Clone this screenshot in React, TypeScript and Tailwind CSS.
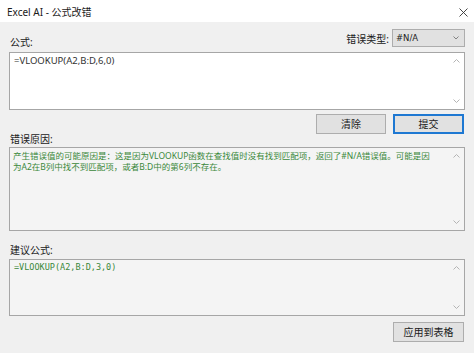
const Chevron = ({ up }: { up?: boolean }) => (
  <svg width="7" height="4" viewBox="0 0 7 4" className="block">
    <path
      d={up ? "M0.5 3.5 L3.5 0.5 L6.5 3.5" : "M0.5 0.5 L3.5 3.5 L6.5 0.5"}
      fill="none"
      stroke="#b4b4b4"
      strokeWidth="1"
    />
  </svg>
);

const ScrollArrows = () => (
  <div className="absolute right-[4px] top-[6px] bottom-[6px] flex flex-col justify-between">
    <Chevron up />
    <Chevron />
  </div>
);

const cjk = "font-['Noto_Sans','Noto_Sans_CJK_SC',sans-serif]";

export default function App() {
  return (
    <div className={`w-[474px] h-[353px] flex flex-col bg-white text-[#1a1a1a] ${cjk}`}>
      {/* title bar */}
      <div className="h-[22px] flex items-center justify-between pl-[7px] pr-[6px] bg-white text-[10px]">
        <span className="mt-[3px]">Excel AI - 公式改错</span>
        <svg width="9" height="9" viewBox="0 0 9 9" className="mt-[3px]">
          <path d="M0.5 0.5 L8.5 8.5 M8.5 0.5 L0.5 8.5" stroke="#333" strokeWidth="0.9" />
        </svg>
      </div>

      <div className="flex-1 bg-[#f0f0f0] px-[9px] flex flex-col">
        {/* row 1 */}
        <div className="h-[30px] flex items-start justify-between">
          <span className="mt-[14px] text-[10px] leading-[12px] pl-[1px]">公式:</span>
          <div className="mt-[7px] flex items-center gap-[3px]">
            <span className="text-[10px] leading-[12px] mt-[2px]">错误类型:</span>
            <div className="w-[73px] h-[18px] bg-[#e1e1e1] border border-[#adadad] flex items-center justify-between pl-[3px] pr-[5px]">
              <span className="text-[8.5px] font-['DejaVu_Sans',sans-serif] text-[#222]">#N/A</span>
              <svg width="6" height="4" viewBox="0 0 6 4">
                <path d="M0.5 0.5 L3 3 L5.5 0.5" fill="none" stroke="#777" strokeWidth="0.9" />
              </svg>
            </div>
          </div>
        </div>

        {/* formula input */}
        <div className="relative h-[58px] bg-white border border-[#a6a6a6] px-[4px] pt-[2px]">
          <div className="text-[9.5px] leading-[12px] text-[#333]">=VLOOKUP(A2,B:D,6,0)</div>
          <ScrollArrows />
        </div>

        {/* buttons */}
        <div className="mt-[4px] flex justify-end gap-[7px] pr-[1px]">
          <button className="w-[70px] h-[20px] bg-[#e1e1e1] border border-[#adadad] text-[10px] leading-none text-[#1a1a1a]">
            清除
          </button>
          <button className="w-[71px] h-[20px] bg-[#e1e1e1] border-2 border-[#1e78d2] text-[10px] leading-none text-[#1a1a1a]">
            提交
          </button>
        </div>

        {/* error reason */}
        <div className="h-[13px] text-[10px] leading-[10px] pl-[1px]">错误原因:</div>
        <div className="relative h-[84px] bg-[#f4f4f4] border border-[#a6a6a6] px-[3px] pt-[2px]">
          <div className="flex flex-col text-[8.5px] leading-[11px] text-[#3a883a] whitespace-nowrap">
            <span>产生错误值的可能原因是：这是因为VLOOKUP函数在查找值时没有找到匹配项，返回了#N/A错误值。可能是因</span>
            <span>为A2在B列中找不到匹配项，或者B:D中的第6列不存在。</span>
          </div>
          <ScrollArrows />
        </div>

        {/* suggested formula */}
        <div className="h-[28px] pt-[13px] text-[10px] leading-[12px] pl-[1px]">建议公式:</div>
        <div className="relative h-[57px] bg-[#f4f4f4] border border-[#a6a6a6] px-[4px] pt-[1px]">
          <div className="text-[8.5px] leading-[12px] text-[#3a883a] font-['DejaVu_Sans_Mono',monospace]">
            =VLOOKUP(A2,B:D,3,0)
          </div>
          <ScrollArrows />
        </div>

        <div className="mt-[6px] flex justify-end pr-[1px]">
          <button className="w-[71px] h-[20px] bg-[#e1e1e1] border border-[#adadad] text-[10px] leading-none text-[#1a1a1a]">
            应用到表格
          </button>
        </div>
      </div>
    </div>
  );
}
